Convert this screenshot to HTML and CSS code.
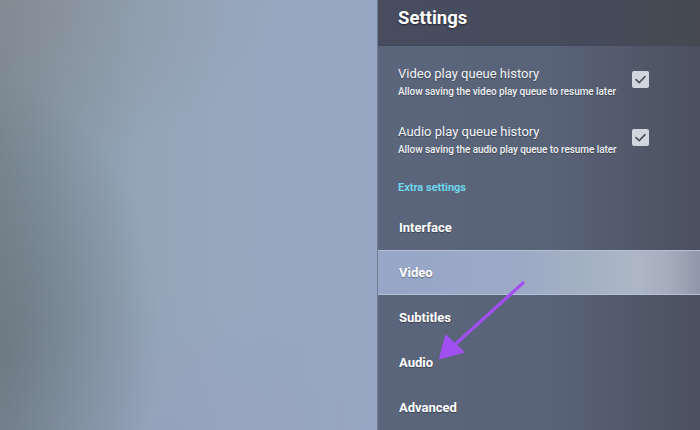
FILE: index.html
```html
<!DOCTYPE html>
<html lang="en">
<head>
<meta charset="utf-8">
<title>Settings</title>
<link rel="stylesheet" href="styles.css">
</head>
<body>
<div class="screen">
  <div class="backdrop"></div>
  <aside class="panel">
    <header class="panel-header"><h1 class="panel-title">Settings</h1></header>
    <div class="panel-body">
      <div class="pref">
        <div class="pref-text">
          <div class="pref-title">Video play queue history</div>
          <div class="pref-summary">Allow saving the video play queue to resume later</div>
        </div>
        <span class="checkbox"><svg viewBox="0 0 17 17" width="17" height="17"><path d="M4 8.6 L7.2 11.6 L13 5.6" fill="none" stroke="#4a5060" stroke-width="1.6" stroke-linecap="round" stroke-linejoin="round"/></svg></span>
      </div>
      <div class="pref">
        <div class="pref-text">
          <div class="pref-title">Audio play queue history</div>
          <div class="pref-summary">Allow saving the audio play queue to resume later</div>
        </div>
        <span class="checkbox"><svg viewBox="0 0 17 17" width="17" height="17"><path d="M4 8.6 L7.2 11.6 L13 5.6" fill="none" stroke="#4a5060" stroke-width="1.6" stroke-linecap="round" stroke-linejoin="round"/></svg></span>
      </div>
      <div class="category">Extra settings</div>
      <ul class="menu">
        <li class="menu-item">Interface</li>
        <li class="menu-item selected">Video</li>
        <li class="menu-item">Subtitles</li>
        <li class="menu-item">Audio</li>
        <li class="menu-item">Advanced</li>
      </ul>
    </div>
  </aside>
  <svg class="annotation" width="700" height="430" viewBox="0 0 700 430">
    <line x1="523" y1="283" x2="450" y2="349" stroke="#a24ff2" stroke-width="3.2" stroke-linecap="round"/>
    <path d="M440 358 L446 336 L463 352 Z" fill="#a24ff2" stroke="#a24ff2" stroke-width="2" stroke-linejoin="round"/>
  </svg>
</div>
</body>
</html>
```
FILE: styles.css
```css
* { box-sizing: border-box; }
html, body { margin: 0; padding: 0; }
body {
  width: 700px;
  height: 430px;
  overflow: hidden;
  font-family: Roboto, "Noto Sans", "Liberation Sans", sans-serif;
  color: #fff;
}
.screen {
  position: relative;
  display: flex;
  width: 700px;
  height: 430px;
}
.backdrop {
  flex: 0 0 377px;
  background:
    radial-gradient(ellipse 160px 260px at 0% 80%, rgba(100,112,122,0.6), rgba(100,112,122,0) 100%),
    radial-gradient(ellipse 260px 160px at 5% 0%, rgba(138,142,150,0.55), rgba(138,142,150,0) 100%),
    radial-gradient(ellipse 200px 140px at 45% 100%, rgba(150,158,190,0.5), rgba(150,158,190,0) 100%),
    linear-gradient(90deg, #7a8892 0%, #8898a6 18%, #93a5b8 38%, #97a8bf 60%, #97a6c2 100%);
}
.panel {
  flex: 1;
  display: flex;
  flex-direction: column;
  background: linear-gradient(90deg, #5b657b 0%, #596378 55%, #4f5666 85%, #4a505d 100%);
  border-left: 1px solid #6f7b90;
}
.panel-header {
  height: 46px;
  padding: 0 0 0 20px;
  background: linear-gradient(90deg, #474c5f 0%, #464b5b 70%, #45494f 100%);
  border-bottom: 1px solid #42475a;
}
.panel-title {
  margin: 0;
  font-size: 18.5px;
  line-height: 36px;
  font-weight: 700;
  text-shadow: 0 1px 2px rgba(0,0,0,0.55);
}
.panel-body {
  padding-top: 8px;
}
.pref {
  display: flex;
  align-items: flex-start;
  height: 58px;
  padding: 11px 51px 0 20px;
}
.pref-text { flex: 1; }
.pref-title {
  font-size: 13px;
  line-height: 17px;
  color: #f2f4f8;
  text-shadow: 0 1px 1px rgba(0,0,0,0.3);
}
.pref-summary {
  margin-top: 3px;
  font-size: 10px;
  line-height: 13px;
  font-weight: 500;
  color: #eef0f4;
  letter-spacing: -0.06px;
  text-shadow: 0 1px 1px rgba(0,0,0,0.3);
}
.checkbox {
  width: 17px;
  height: 17px;
  margin-top: 6px;
  border-radius: 2px;
  background: #d2d6de;
  display: flex;
}
.category {
  height: 35px;
  padding-left: 20px;
  font-size: 11px;
  line-height: 35px;
  font-weight: 700;
  color: #6fd6ee;
}
.menu {
  list-style: none;
  margin: 0;
  padding: 0;
}
.menu-item {
  height: 45px;
  padding-left: 21px;
  font-size: 13px;
  line-height: 45px;
  font-weight: 700;
  text-shadow: 0 1px 1px rgba(0,0,0,0.35);
}
.menu-item.selected {
  line-height: 43px;
  background: linear-gradient(90deg, #97a5c7 0%, #9daac6 45%, #a4b1c2 65%, #adb7c6 80%, #a3adbc 90%, #8e98a8 100%);
  border-top: 1px solid #b4c0d8;
  border-bottom: 1px solid #b4c0d8;
}
.annotation {
  position: absolute;
  left: 0;
  top: 0;
  pointer-events: none;
}
```
